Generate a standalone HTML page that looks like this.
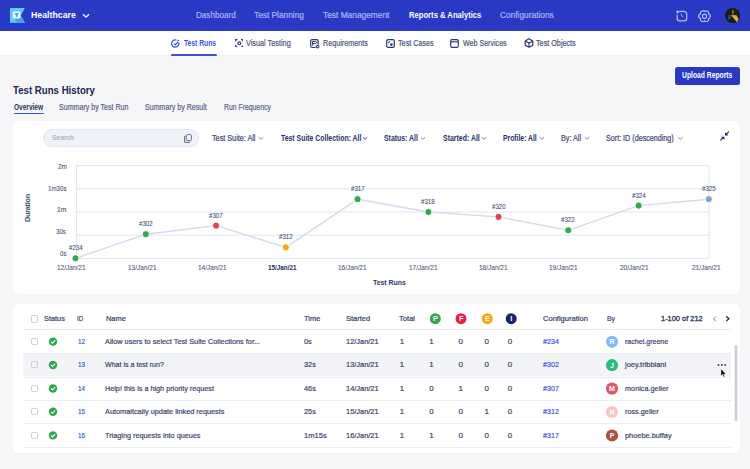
<!DOCTYPE html>
<html><head><meta charset="utf-8">
<style>
html,body{margin:0;padding:0;width:750px;height:469px;overflow:hidden;background:#f6f6f9;font-family:"Liberation Sans",sans-serif;}
.abs{position:absolute;}
.t{position:absolute;white-space:nowrap;transform-origin:0 0;}
#hdr{position:absolute;left:0;top:0;width:750px;height:31px;background:#2a39c4;}
#sub{position:absolute;left:0;top:31px;width:750px;height:24px;background:#fff;box-shadow:0 1px 3px rgba(30,40,80,0.04);}
.card{position:absolute;background:#fff;border-radius:5px;box-shadow:0 0 1.5px rgba(40,50,90,0.05);}
.cb{position:absolute;width:5.3px;height:5.3px;border:1.2px solid #cdcfd6;border-radius:1.6px;}
.hl{position:absolute;left:23px;width:708px;height:1px;background:#eceef4;}
</style></head><body>
<div id="hdr"></div>
<div id="sub"></div>
<!-- logo -->
<svg class="abs" style="left:10px;top:8.2px" width="15" height="15" viewBox="0 0 15 15">
  <path d="M0 0H14.8L10.8 7.4L14.8 14.8H0Z" fill="#5ccbfa"/>
  <path d="M4 10.6L11.9 9.3L14.8 14.8H7.5Z" fill="#4a9ff3"/>
  <rect x="2.9" y="3.5" width="7.5" height="7" rx="1.6" fill="#fff"/>
  <path d="M4.6 4.9H8.7V6.6H7.5V9.2H5.8V6.6H4.6Z" fill="#4a9ff3"/>
</svg>
<svg class="abs" style="left:82px;top:13px" width="8" height="6" viewBox="0 0 8 6"><path d="M1 1.2L4 4.2L7 1.2" fill="none" stroke="#fff" stroke-width="1.3"/></svg>
<!-- header right icons -->
<svg class="abs" style="left:675.7px;top:9.6px" width="12" height="12" viewBox="0 0 12 12">
  <path d="M1.2 4.8V8.3A2.6 2.6 0 0 0 3.8 10.9H8.1A2.6 2.6 0 0 0 10.7 8.3V4A2.6 2.6 0 0 0 8.1 1.4H3.4" fill="none" stroke="#b6c2ff" stroke-width="1.15"/>
  <path d="M0.4 0.6L3.9 1.3L1 3.9Z" fill="#b6c2ff"/>
  <path d="M5 3.6L5.9 6.1L7 6.8" fill="none" stroke="#b6c2ff" stroke-width="0.8"/>
</svg>
<svg class="abs" style="left:698px;top:10px" width="13" height="13" viewBox="0 0 13 13">
  <path d="M12.30,6.20 L12.28,6.50 L12.23,6.80 L12.13,7.09 L12.00,7.37 L11.84,7.63 L11.65,7.87 L11.42,8.09 L11.16,8.27 L10.86,8.42 L10.44,8.48 L10.60,8.86 L10.63,9.20 L10.59,9.52 L10.52,9.82 L10.41,10.11 L10.27,10.38 L10.09,10.63 L9.88,10.86 L9.65,11.06 L9.40,11.22 L9.13,11.36 L8.84,11.46 L8.54,11.52 L8.24,11.55 L7.93,11.54 L7.63,11.49 L7.32,11.40 L7.03,11.27 L6.76,11.08 L6.50,10.75 L6.24,11.08 L5.97,11.27 L5.68,11.40 L5.37,11.49 L5.07,11.54 L4.76,11.55 L4.46,11.52 L4.16,11.46 L3.87,11.36 L3.60,11.22 L3.35,11.06 L3.12,10.86 L2.91,10.63 L2.73,10.38 L2.59,10.11 L2.48,9.82 L2.41,9.52 L2.37,9.20 L2.40,8.86 L2.56,8.48 L2.14,8.42 L1.84,8.27 L1.58,8.09 L1.35,7.87 L1.16,7.63 L1.00,7.37 L0.87,7.09 L0.77,6.80 L0.72,6.50 L0.70,6.20 L0.72,5.90 L0.77,5.60 L0.87,5.31 L1.00,5.03 L1.16,4.77 L1.35,4.53 L1.58,4.31 L1.84,4.13 L2.14,3.98 L2.56,3.92 L2.40,3.54 L2.37,3.20 L2.41,2.88 L2.48,2.58 L2.59,2.29 L2.73,2.02 L2.91,1.77 L3.12,1.54 L3.35,1.34 L3.60,1.18 L3.87,1.04 L4.16,0.94 L4.46,0.88 L4.76,0.85 L5.07,0.86 L5.37,0.91 L5.68,1.00 L5.97,1.13 L6.24,1.32 L6.50,1.65 L6.76,1.32 L7.03,1.13 L7.32,1.00 L7.63,0.91 L7.93,0.86 L8.24,0.85 L8.54,0.88 L8.84,0.94 L9.13,1.04 L9.40,1.18 L9.65,1.34 L9.88,1.54 L10.09,1.77 L10.27,2.02 L10.41,2.29 L10.52,2.58 L10.59,2.88 L10.63,3.20 L10.60,3.54 L10.44,3.92 L10.86,3.98 L11.16,4.13 L11.42,4.31 L11.65,4.53 L11.84,4.77 L12.00,5.03 L12.13,5.31 L12.23,5.60 L12.28,5.90Z" fill="none" stroke="#b6c2ff" stroke-width="1.15" stroke-linejoin="round"/>
  <circle cx="6.5" cy="6.2" r="2.1" fill="none" stroke="#b6c2ff" stroke-width="1.15"/>
</svg>
<svg class="abs" style="left:724.8px;top:7.8px" width="15.2" height="15.2" viewBox="0 0 15.2 15.2">
  <defs><clipPath id="av"><circle cx="7.6" cy="7.6" r="7.6"/></clipPath></defs>
  <circle cx="7.6" cy="7.6" r="7.6" fill="#1e1a14"/>
  <g clip-path="url(#av)">
    <path d="M5.9 7.1L11.4 7.3L13.6 11L12 14.3Z" fill="#e6b040"/>
    <ellipse cx="4.6" cy="9.2" rx="1.7" ry="2.4" fill="#22428f"/>
    <rect x="7" y="1.9" width="1.9" height="4.6" rx="0.8" fill="#86672f"/>
  </g>
</svg>
<!-- subnav icons -->
<svg class="abs" style="left:170.8px;top:38.6px" width="9.2" height="9.2" viewBox="0 0 10 10">
  <path d="M8.6 4.3A4 4 0 1 1 6 1.1" fill="none" stroke="#3b4fe0" stroke-width="1.3"/>
  <path d="M3.1 5L4.6 6.5L7.9 3" fill="none" stroke="#3b4fe0" stroke-width="1.3"/>
  <circle cx="7.8" cy="1.6" r="0.9" fill="#3b4fe0"/>
</svg>
<div class="abs" style="left:171.2px;top:54px;width:46px;height:1.7px;background:#3b4fe0;border-radius:1px"></div>
<svg class="abs" style="left:234.6px;top:38.7px" width="8.6" height="8.6" viewBox="0 0 9 9">
  <path d="M0.7 2.6V0.7H2.6M6.4 0.7H8.3V2.6M8.3 6.4V8.3H6.4M2.6 8.3H0.7V6.4" fill="none" stroke="#2e3870" stroke-width="1.2"/>
  <circle cx="4.5" cy="4.5" r="1.5" fill="none" stroke="#2e3870" stroke-width="1.2"/>
</svg>
<svg class="abs" style="left:310px;top:38.5px" width="10" height="10" viewBox="0 0 10 10">
  <rect x="0.7" y="0.7" width="7.4" height="7.8" rx="1.4" fill="none" stroke="#2e3870" stroke-width="1.2"/>
  <path d="M2.6 2.4H5.4A1.1 1.1 0 0 1 5.4 4.6H2.6M2.6 2.4V6.8" fill="none" stroke="#2e3870" stroke-width="1"/>
  <circle cx="7.6" cy="7.6" r="2.1" fill="#2e3870" stroke="#fff" stroke-width="0.6"/>
  <circle cx="7.6" cy="7.6" r="0.7" fill="#fff"/>
</svg>
<svg class="abs" style="left:385.5px;top:38.5px" width="9" height="9" viewBox="0 0 9 9">
  <rect x="0.7" y="0.7" width="7.6" height="7.6" rx="1.4" fill="none" stroke="#2e3870" stroke-width="1.2"/>
  <path d="M2.2 3.9L3.9 2.4" fill="none" stroke="#2e3870" stroke-width="1.1"/>
  <circle cx="5.4" cy="5.6" r="1.35" fill="#2e3870"/>
</svg>
<svg class="abs" style="left:449.8px;top:38.5px" width="9" height="9" viewBox="0 0 9 9">
  <rect x="0.7" y="0.7" width="7.6" height="7.6" rx="1.2" fill="none" stroke="#2e3870" stroke-width="1.2"/>
  <path d="M0.7 2.8H8.3" fill="none" stroke="#2e3870" stroke-width="1.1"/>
</svg>
<svg class="abs" style="left:523.5px;top:38.3px" width="10" height="10" viewBox="0 0 10 10">
  <path d="M5 0.8L8.8 3V7.2L5 9.3L1.2 7.2V3Z" fill="none" stroke="#2e3870" stroke-width="1.2" stroke-linejoin="round"/>
  <path d="M1.5 3.2L5 5.1L8.5 3.2M5 5.1V9" fill="none" stroke="#2e3870" stroke-width="1.1"/>
</svg>
<!-- upload button -->
<div class="abs" style="left:674px;top:66px;width:67px;height:19px;background:#fff;border-radius:3px;opacity:.9"></div>
<div class="abs" style="left:675px;top:67px;width:65px;height:17.5px;background:#2a39c4;border-radius:2.5px"></div>
<!-- tabs underline -->
<div class="abs" style="left:14px;top:112.6px;width:30px;height:1.5px;background:#3b4fe0;border-radius:1px"></div>
<!-- cards -->
<div class="card" style="left:12.8px;top:121.4px;width:727px;height:172.9px"></div>
<div class="card" style="left:12.9px;top:303.6px;width:726.9px;height:149.3px"></div>
<!-- search -->
<div class="abs" style="left:43px;top:129px;width:153.5px;height:15.7px;background:#f0f2f9;border:1px solid #e2e6f1;border-radius:9px"></div>
<svg class="abs" style="left:183.5px;top:133.5px" width="8" height="9" viewBox="0 0 8 9">
  <rect x="2.2" y="0.6" width="5.2" height="6" rx="1" fill="none" stroke="#5a6280" stroke-width="0.9"/>
  <path d="M1.6 2.3H0.6V8.4H5.7V7.4" fill="none" stroke="#5a6280" stroke-width="0.9"/>
</svg>
<!-- filter chevrons -->
<svg class="abs" style="left:0;top:0" width="750" height="160" viewBox="0 0 750 160">
  <g fill="none" stroke="#6b7399" stroke-width="0.9">
    <path d="M259 137.3L261.1 139.3L263.2 137.3"/>
    <path d="M363 137.3L365.1 139.3L367.2 137.3" stroke="#24306a"/>
    <path d="M420.9 137.3L423 139.3L425.1 137.3"/>
    <path d="M482 137.3L484.1 139.3L486.2 137.3"/>
    <path d="M539.8 137.3L541.9 139.3L544 137.3"/>
    <path d="M585 137.3L587.1 139.3L589.2 137.3"/>
    <path d="M678.4 137.3L680.5 139.3L682.6 137.3"/>
  </g>
  <g fill="#1c2661">
    <path d="M725 132.2V135.6H728.4Z"/>
    <path d="M721 136.7H724.3V140Z"/>
  </g>
  <g stroke="#1c2661" stroke-width="1.2" fill="none">
    <path d="M726.2 134.4L728.9 131.7"/>
    <path d="M723 137.8L720.4 140.4"/>
  </g>
</svg>
<svg class="abs" style="left:0;top:0" width="750" height="469" viewBox="0 0 750 469">
<line x1="76" y1="165.6" x2="709" y2="165.6" stroke="#e1e5f2" stroke-width="1"/>
<line x1="76" y1="188.8" x2="709" y2="188.8" stroke="#e1e5f2" stroke-width="1"/>
<line x1="76" y1="212.0" x2="709" y2="212.0" stroke="#e1e5f2" stroke-width="1"/>
<line x1="76" y1="235.2" x2="709" y2="235.2" stroke="#e1e5f2" stroke-width="1"/>
<line x1="76" y1="258.4" x2="709" y2="258.4" stroke="#e1e5f2" stroke-width="1"/>
<line x1="76.4" y1="165.5" x2="76.4" y2="258.3" stroke="#e1e5f2" stroke-width="1"/>
<line x1="709" y1="165.5" x2="709" y2="258.3" stroke="#e1e5f2" stroke-width="1"/>
<path d="M75.5,258.3 L145.8,234.2 L216.1,225.6 L285.8,247.4 L357.6,199.2 L428.4,212.0 L498.5,216.9 L568.2,230.3 L638.6,205.6 L708.8,199.2" fill="none" stroke="#d3daef" stroke-width="1.4"/>
<circle cx="75.5" cy="258.3" r="3.6" fill="#33a84f" stroke="#fff" stroke-width="1"/>
<circle cx="145.8" cy="234.2" r="3.6" fill="#33a84f" stroke="#fff" stroke-width="1"/>
<circle cx="216.1" cy="225.6" r="3.6" fill="#dc4457" stroke="#fff" stroke-width="1"/>
<circle cx="285.8" cy="247.4" r="3.6" fill="#f6aa0c" stroke="#fff" stroke-width="1"/>
<circle cx="357.6" cy="199.2" r="3.6" fill="#33a84f" stroke="#fff" stroke-width="1"/>
<circle cx="428.4" cy="212.0" r="3.6" fill="#33a84f" stroke="#fff" stroke-width="1"/>
<circle cx="498.5" cy="216.9" r="3.6" fill="#dc4457" stroke="#fff" stroke-width="1"/>
<circle cx="568.2" cy="230.3" r="3.6" fill="#33a84f" stroke="#fff" stroke-width="1"/>
<circle cx="638.6" cy="205.6" r="3.6" fill="#33a84f" stroke="#fff" stroke-width="1"/>
<circle cx="708.8" cy="199.2" r="3.6" fill="#7aa4d4" stroke="#fff" stroke-width="1"/>
</svg>
<!-- rotated Duration -->
<div class="t" style="left:28px;top:208.1px;transform-origin:50% 50%;transform:translate(-50%,-50%) rotate(-90deg);font-size:7.2px;line-height:7.2px;font-weight:700;color:#3a4680;letter-spacing:-0.2px">Duration</div>
<!-- table -->
<div class="hl" style="top:329px;height:1.3px;background:#e9ebf1"></div>
<div class="abs" style="left:22.5px;top:353px;width:708px;height:23.3px;background:#f3f4f7"></div>
<div class="hl" style="top:353px"></div>
<div class="hl" style="top:376.5px"></div>
<div class="hl" style="top:400px"></div>
<div class="hl" style="top:423.3px"></div>
<div class="hl" style="top:446.7px"></div>
<div class="cb" style="left:30.7px;top:315.3px"></div>
<div class="cb" style="left:30.7px;top:337.8px"></div>
<div class="cb" style="left:30.7px;top:361.2px"></div>
<div class="cb" style="left:30.7px;top:384.7px"></div>
<div class="cb" style="left:30.7px;top:408px"></div>
<div class="cb" style="left:30.7px;top:431.6px"></div>
<svg class="abs" style="left:0;top:300px" width="750" height="169" viewBox="0 300 750 169">
  <g>
    <circle cx="53" cy="341.6" r="4.2" fill="#2ea84c"/><path d="M51 341.6L52.5 343.1L55.1 340.3" fill="none" stroke="#fff" stroke-width="1.1"/>
    <circle cx="53" cy="365" r="4.2" fill="#2ea84c"/><path d="M51 365L52.5 366.5L55.1 363.7" fill="none" stroke="#fff" stroke-width="1.1"/>
    <circle cx="53" cy="388.5" r="4.2" fill="#2ea84c"/><path d="M51 388.5L52.5 390L55.1 387.2" fill="none" stroke="#fff" stroke-width="1.1"/>
    <circle cx="53" cy="411.8" r="4.2" fill="#2ea84c"/><path d="M51 411.8L52.5 413.3L55.1 410.5" fill="none" stroke="#fff" stroke-width="1.1"/>
    <circle cx="53" cy="435.4" r="4.2" fill="#2ea84c"/><path d="M51 435.4L52.5 436.9L55.1 434.1" fill="none" stroke="#fff" stroke-width="1.1"/>
  </g>
  <g font-family="Liberation Sans" font-size="7.4" font-weight="700" fill="#fff" text-anchor="middle">
    <circle cx="435.3" cy="318.7" r="5.5" fill="#35a84b"/><text x="435.4" y="321.4">P</text>
    <circle cx="461" cy="318.7" r="5.5" fill="#e41f45"/><text x="461.2" y="321.4">F</text>
    <circle cx="487.3" cy="318.7" r="5.5" fill="#f5a80e"/><text x="487.4" y="321.4">E</text>
    <circle cx="511.2" cy="318.7" r="5.5" fill="#17286a"/><text x="511.2" y="321.4">I</text>
  </g>
  <g font-family="Liberation Sans" font-size="7" font-weight="700" fill="#fff" text-anchor="middle">
    <circle cx="612" cy="341.8" r="6.1" fill="#83b9f6"/><text x="612" y="344.4">R</text>
    <circle cx="612" cy="365.2" r="6.1" fill="#2bbd7e"/><text x="612" y="367.8">J</text>
    <circle cx="612" cy="388.6" r="6.1" fill="#e0566a"/><text x="612" y="391.2">M</text>
    <circle cx="612" cy="412" r="6.1" fill="#f9c6c3"/><text x="612" y="414.6">R</text>
    <circle cx="612" cy="435.5" r="6.1" fill="#b0503f"/><text x="612" y="438.1">P</text>
  </g>
  <path d="M716 316.3L713.4 318.7L716 321.1" fill="none" stroke="#8aaed8" stroke-width="1.1"/>
  <path d="M726.3 316.3L728.9 318.7L726.3 321.1" fill="none" stroke="#1f2a5c" stroke-width="1.3"/>
  <g fill="#3b4352"><circle cx="718.5" cy="365" r="1"/><circle cx="721.8" cy="365" r="1"/><circle cx="725.1" cy="365" r="1"/></g>
  <path d="M720.9 368.8V376.2L722.6 374.6L723.8 377.2L724.9 376.7L723.8 374.2L726.1 374.1Z" fill="#111" stroke="#fff" stroke-width="0.5"/>
  <rect x="734.7" y="345" width="2.6" height="76" rx="1.3" fill="#c9ccd4"/>
</svg>
<div class="t" style="left:30.50px;top:11.28px;font-size:9.2px;line-height:9.2px;font-weight:700;color:#ffffff;transform:scaleX(0.9536);">Healthcare</div>
<div class="t" style="left:195.60px;top:11.41px;font-size:8.7px;line-height:8.7px;font-weight:400;color:#a9b6f5;transform:scaleX(0.9328);-webkit-text-stroke:0.2px #a9b6f5;">Dashboard</div>
<div class="t" style="left:253.90px;top:11.41px;font-size:8.7px;line-height:8.7px;font-weight:400;color:#a9b6f5;transform:scaleX(0.9575);-webkit-text-stroke:0.2px #a9b6f5;">Test Planning</div>
<div class="t" style="left:323.20px;top:11.41px;font-size:8.7px;line-height:8.7px;font-weight:400;color:#a9b6f5;transform:scaleX(0.9621);-webkit-text-stroke:0.2px #a9b6f5;">Test Management</div>
<div class="t" style="left:408.60px;top:11.41px;font-size:8.7px;line-height:8.7px;font-weight:700;color:#ffffff;transform:scaleX(0.8801);">Reports &amp; Analytics</div>
<div class="t" style="left:499.50px;top:11.41px;font-size:8.7px;line-height:8.7px;font-weight:400;color:#a9b6f5;transform:scaleX(0.9599);-webkit-text-stroke:0.2px #a9b6f5;">Configurations</div>
<div class="t" style="left:184.30px;top:39.34px;font-size:8.3px;line-height:8.3px;font-weight:700;color:#3b4fe0;transform:scaleX(0.8125);">Test Runs</div>
<div class="t" style="left:246.40px;top:39.34px;font-size:8.3px;line-height:8.3px;font-weight:400;color:#4d5682;transform:scaleX(0.8789);-webkit-text-stroke:0.2px #4d5682;">Visual Testing</div>
<div class="t" style="left:323.00px;top:39.34px;font-size:8.3px;line-height:8.3px;font-weight:400;color:#4d5682;transform:scaleX(0.8699);-webkit-text-stroke:0.2px #4d5682;">Requirements</div>
<div class="t" style="left:397.70px;top:39.34px;font-size:8.3px;line-height:8.3px;font-weight:400;color:#4d5682;transform:scaleX(0.8706);-webkit-text-stroke:0.2px #4d5682;">Test Cases</div>
<div class="t" style="left:463.00px;top:39.34px;font-size:8.3px;line-height:8.3px;font-weight:400;color:#4d5682;transform:scaleX(0.8549);-webkit-text-stroke:0.2px #4d5682;">Web Services</div>
<div class="t" style="left:536.40px;top:39.34px;font-size:8.3px;line-height:8.3px;font-weight:400;color:#4d5682;transform:scaleX(0.8703);-webkit-text-stroke:0.2px #4d5682;">Test Objects</div>
<div class="t" style="left:13.00px;top:85.19px;font-size:10.6px;line-height:10.6px;font-weight:700;color:#1a2352;transform:scaleX(0.9114);">Test Runs History</div>
<div class="t" style="left:682.20px;top:71.06px;font-size:8.4px;line-height:8.4px;font-weight:700;color:#ffffff;transform:scaleX(0.8071);">Upload Reports</div>
<div class="t" style="left:13.80px;top:103.83px;font-size:8.2px;line-height:8.2px;font-weight:700;color:#2b3563;transform:scaleX(0.7991);">Overview</div>
<div class="t" style="left:59.00px;top:103.83px;font-size:8.2px;line-height:8.2px;font-weight:400;color:#5a6390;transform:scaleX(0.8644);-webkit-text-stroke:0.2px #5a6390;">Summary by Test Run</div>
<div class="t" style="left:145.40px;top:103.83px;font-size:8.2px;line-height:8.2px;font-weight:400;color:#5a6390;transform:scaleX(0.8648);-webkit-text-stroke:0.2px #5a6390;">Summary by Result</div>
<div class="t" style="left:224.40px;top:103.83px;font-size:8.2px;line-height:8.2px;font-weight:400;color:#5a6390;transform:scaleX(0.8368);-webkit-text-stroke:0.2px #5a6390;">Run Frequency</div>
<div class="t" style="left:52.00px;top:133.97px;font-size:7.8px;line-height:7.8px;font-weight:400;color:#a6aec4;transform:scaleX(0.8823);-webkit-text-stroke:0.2px #a6aec4;">Search</div>
<div class="t" style="left:211.60px;top:134.04px;font-size:8.3px;line-height:8.3px;font-weight:400;color:#3d4775;transform:scaleX(0.8727);-webkit-text-stroke:0.2px #3d4775;">Test Suite: All</div>
<div class="t" style="left:280.80px;top:134.04px;font-size:8.3px;line-height:8.3px;font-weight:700;color:#24306a;transform:scaleX(0.8305);">Test Suite Collection: All</div>
<div class="t" style="left:384.40px;top:134.04px;font-size:8.3px;line-height:8.3px;font-weight:700;color:#24306a;transform:scaleX(0.8300);">Status: All</div>
<div class="t" style="left:442.80px;top:134.04px;font-size:8.3px;line-height:8.3px;font-weight:700;color:#24306a;transform:scaleX(0.8373);">Started: All</div>
<div class="t" style="left:503.30px;top:134.04px;font-size:8.3px;line-height:8.3px;font-weight:700;color:#24306a;transform:scaleX(0.8183);">Profile: All</div>
<div class="t" style="left:560.60px;top:134.04px;font-size:8.3px;line-height:8.3px;font-weight:400;color:#3d4775;transform:scaleX(0.8703);-webkit-text-stroke:0.2px #3d4775;">By: All</div>
<div class="t" style="left:606.20px;top:134.04px;font-size:8.3px;line-height:8.3px;font-weight:400;color:#3d4775;transform:scaleX(0.8635);-webkit-text-stroke:0.2px #3d4775;">Sort: ID (descending)</div>
<div class="t" style="left:57.50px;top:163.92px;font-size:6.8px;line-height:6.8px;font-weight:400;color:#4a5480;transform:scaleX(0.9509);-webkit-text-stroke:0.1px #4a5480;">2m</div>
<div class="t" style="left:47.70px;top:185.62px;font-size:6.8px;line-height:6.8px;font-weight:400;color:#4a5480;transform:scaleX(0.9094);-webkit-text-stroke:0.1px #4a5480;">1m30s</div>
<div class="t" style="left:57.00px;top:207.42px;font-size:6.8px;line-height:6.8px;font-weight:400;color:#4a5480;-webkit-text-stroke:0.1px #4a5480;">1m</div>
<div class="t" style="left:56.40px;top:229.02px;font-size:6.8px;line-height:6.8px;font-weight:400;color:#4a5480;transform:scaleX(0.8996);-webkit-text-stroke:0.1px #4a5480;">30s</div>
<div class="t" style="left:59.80px;top:251.12px;font-size:6.8px;line-height:6.8px;font-weight:400;color:#4a5480;transform:scaleX(0.8997);-webkit-text-stroke:0.1px #4a5480;">0s</div>
<div class="t" style="left:68.50px;top:245.39px;font-size:6.6px;line-height:6.6px;font-weight:400;color:#454e78;transform:scaleX(0.9332);-webkit-text-stroke:0.08px #454e78;">#234</div>
<div class="t" style="left:57.25px;top:265.33px;font-size:6.9px;line-height:6.9px;font-weight:400;color:#4f5880;transform:scaleX(0.9430);-webkit-text-stroke:0.08px #4f5880;">12/Jan/21</div>
<div class="t" style="left:138.80px;top:221.29px;font-size:6.6px;line-height:6.6px;font-weight:400;color:#454e78;transform:scaleX(0.9332);-webkit-text-stroke:0.08px #454e78;">#302</div>
<div class="t" style="left:127.55px;top:265.33px;font-size:6.9px;line-height:6.9px;font-weight:400;color:#4f5880;transform:scaleX(0.9430);-webkit-text-stroke:0.08px #4f5880;">13/Jan/21</div>
<div class="t" style="left:209.10px;top:212.69px;font-size:6.6px;line-height:6.6px;font-weight:400;color:#454e78;transform:scaleX(0.9332);-webkit-text-stroke:0.08px #454e78;">#307</div>
<div class="t" style="left:197.85px;top:265.33px;font-size:6.9px;line-height:6.9px;font-weight:400;color:#4f5880;transform:scaleX(0.9430);-webkit-text-stroke:0.08px #4f5880;">14/Jan/21</div>
<div class="t" style="left:278.80px;top:234.49px;font-size:6.6px;line-height:6.6px;font-weight:400;color:#454e78;transform:scaleX(0.9332);-webkit-text-stroke:0.08px #454e78;">#312</div>
<div class="t" style="left:268.15px;top:265.33px;font-size:6.9px;line-height:6.9px;font-weight:700;color:#1f2a5c;transform:scaleX(0.9199);">15/Jan/21</div>
<div class="t" style="left:350.60px;top:186.29px;font-size:6.6px;line-height:6.6px;font-weight:400;color:#454e78;transform:scaleX(0.9332);-webkit-text-stroke:0.08px #454e78;">#317</div>
<div class="t" style="left:338.45px;top:265.33px;font-size:6.9px;line-height:6.9px;font-weight:400;color:#4f5880;transform:scaleX(0.9430);-webkit-text-stroke:0.08px #4f5880;">16/Jan/21</div>
<div class="t" style="left:421.40px;top:199.09px;font-size:6.6px;line-height:6.6px;font-weight:400;color:#454e78;transform:scaleX(0.9332);-webkit-text-stroke:0.08px #454e78;">#318</div>
<div class="t" style="left:408.75px;top:265.33px;font-size:6.9px;line-height:6.9px;font-weight:400;color:#4f5880;transform:scaleX(0.9430);-webkit-text-stroke:0.08px #4f5880;">17/Jan/21</div>
<div class="t" style="left:491.50px;top:203.99px;font-size:6.6px;line-height:6.6px;font-weight:400;color:#454e78;transform:scaleX(0.9332);-webkit-text-stroke:0.08px #454e78;">#320</div>
<div class="t" style="left:479.05px;top:265.33px;font-size:6.9px;line-height:6.9px;font-weight:400;color:#4f5880;transform:scaleX(0.9430);-webkit-text-stroke:0.08px #4f5880;">18/Jan/21</div>
<div class="t" style="left:561.20px;top:217.39px;font-size:6.6px;line-height:6.6px;font-weight:400;color:#454e78;transform:scaleX(0.9332);-webkit-text-stroke:0.08px #454e78;">#322</div>
<div class="t" style="left:549.35px;top:265.33px;font-size:6.9px;line-height:6.9px;font-weight:400;color:#4f5880;transform:scaleX(0.9430);-webkit-text-stroke:0.08px #4f5880;">19/Jan/21</div>
<div class="t" style="left:631.60px;top:192.69px;font-size:6.6px;line-height:6.6px;font-weight:400;color:#454e78;transform:scaleX(0.9332);-webkit-text-stroke:0.08px #454e78;">#324</div>
<div class="t" style="left:619.65px;top:265.33px;font-size:6.9px;line-height:6.9px;font-weight:400;color:#4f5880;transform:scaleX(0.9430);-webkit-text-stroke:0.08px #4f5880;">20/Jan/21</div>
<div class="t" style="left:701.80px;top:186.29px;font-size:6.6px;line-height:6.6px;font-weight:400;color:#454e78;transform:scaleX(0.9332);-webkit-text-stroke:0.08px #454e78;">#325</div>
<div class="t" style="left:692.15px;top:265.33px;font-size:6.9px;line-height:6.9px;font-weight:400;color:#4f5880;transform:scaleX(0.9430);-webkit-text-stroke:0.08px #4f5880;">21/Jan/21</div>
<div class="t" style="left:373.30px;top:278.91px;font-size:7.4px;line-height:7.4px;font-weight:700;color:#2b3668;transform:scaleX(0.9297);">Test Runs</div>
<div class="t" style="left:44.00px;top:315.27px;font-size:7.8px;line-height:7.8px;font-weight:500;color:#333d6a;transform:scaleX(0.9457);-webkit-text-stroke:0.2px #333d6a;">Status</div>
<div class="t" style="left:76.80px;top:315.27px;font-size:7.8px;line-height:7.8px;font-weight:500;color:#333d6a;transform:scaleX(0.7837);-webkit-text-stroke:0.2px #333d6a;">ID</div>
<div class="t" style="left:105.80px;top:315.27px;font-size:7.8px;line-height:7.8px;font-weight:500;color:#333d6a;transform:scaleX(0.9530);-webkit-text-stroke:0.2px #333d6a;">Name</div>
<div class="t" style="left:303.60px;top:315.27px;font-size:7.8px;line-height:7.8px;font-weight:500;color:#333d6a;transform:scaleX(0.9581);-webkit-text-stroke:0.2px #333d6a;">Time</div>
<div class="t" style="left:345.90px;top:315.27px;font-size:7.8px;line-height:7.8px;font-weight:500;color:#333d6a;transform:scaleX(0.9636);-webkit-text-stroke:0.2px #333d6a;">Started</div>
<div class="t" style="left:398.90px;top:315.27px;font-size:7.8px;line-height:7.8px;font-weight:500;color:#333d6a;transform:scaleX(0.9739);-webkit-text-stroke:0.2px #333d6a;">Total</div>
<div class="t" style="left:543.00px;top:315.27px;font-size:7.8px;line-height:7.8px;font-weight:500;color:#333d6a;transform:scaleX(0.9665);-webkit-text-stroke:0.2px #333d6a;">Configuration</div>
<div class="t" style="left:607.40px;top:315.27px;font-size:7.8px;line-height:7.8px;font-weight:500;color:#333d6a;transform:scaleX(0.8695);-webkit-text-stroke:0.2px #333d6a;">By</div>
<div class="t" style="left:661.10px;top:315.27px;font-size:7.8px;line-height:7.8px;font-weight:500;color:#2a3460;transform:scaleX(0.9528);-webkit-text-stroke:0.3px #2a3460;">1-100 of 212</div>
<div class="t" style="left:77.90px;top:337.70px;font-size:8.0px;line-height:8.0px;font-weight:400;color:#4354e0;transform:scaleX(0.7831);-webkit-text-stroke:0.2px #4354e0;">12</div>
<div class="t" style="left:105.30px;top:337.70px;font-size:8.0px;line-height:8.0px;font-weight:400;color:#38426e;transform:scaleX(0.9162);-webkit-text-stroke:0.2px #38426e;">Allow users to select Test Suite Collections for...</div>
<div class="t" style="left:303.50px;top:337.70px;font-size:8.0px;line-height:8.0px;font-weight:400;color:#38426e;transform:scaleX(0.9232);-webkit-text-stroke:0.2px #38426e;">0s</div>
<div class="t" style="left:345.70px;top:337.70px;font-size:8.0px;line-height:8.0px;font-weight:400;color:#38426e;transform:scaleX(0.9274);-webkit-text-stroke:0.2px #38426e;">12/Jan/21</div>
<div class="t" style="left:399.80px;top:337.70px;font-size:8.0px;line-height:8.0px;font-weight:400;color:#38426e;-webkit-text-stroke:0.2px #38426e;">1</div>
<div class="t" style="left:429.30px;top:337.70px;font-size:8.0px;line-height:8.0px;font-weight:400;color:#38426e;-webkit-text-stroke:0.2px #38426e;">1</div>
<div class="t" style="left:458.50px;top:337.70px;font-size:8.0px;line-height:8.0px;font-weight:400;color:#38426e;-webkit-text-stroke:0.2px #38426e;">0</div>
<div class="t" style="left:484.50px;top:337.70px;font-size:8.0px;line-height:8.0px;font-weight:400;color:#38426e;-webkit-text-stroke:0.2px #38426e;">0</div>
<div class="t" style="left:507.80px;top:337.70px;font-size:8.0px;line-height:8.0px;font-weight:400;color:#38426e;-webkit-text-stroke:0.2px #38426e;">0</div>
<div class="t" style="left:542.60px;top:337.70px;font-size:8.0px;line-height:8.0px;font-weight:400;color:#4354e0;transform:scaleX(0.8938);-webkit-text-stroke:0.2px #4354e0;">#234</div>
<div class="t" style="left:625.00px;top:337.70px;font-size:8.0px;line-height:8.0px;font-weight:400;color:#38426e;transform:scaleX(0.8833);-webkit-text-stroke:0.2px #38426e;">rachel.greene</div>
<div class="t" style="left:77.90px;top:361.10px;font-size:8.0px;line-height:8.0px;font-weight:400;color:#4354e0;transform:scaleX(0.7831);-webkit-text-stroke:0.2px #4354e0;">13</div>
<div class="t" style="left:105.30px;top:361.10px;font-size:8.0px;line-height:8.0px;font-weight:400;color:#38426e;transform:scaleX(0.8833);-webkit-text-stroke:0.2px #38426e;">What is a test run?</div>
<div class="t" style="left:303.50px;top:361.10px;font-size:8.0px;line-height:8.0px;font-weight:400;color:#38426e;transform:scaleX(0.9148);-webkit-text-stroke:0.2px #38426e;">32s</div>
<div class="t" style="left:345.70px;top:361.10px;font-size:8.0px;line-height:8.0px;font-weight:400;color:#38426e;transform:scaleX(0.9274);-webkit-text-stroke:0.2px #38426e;">13/Jan/21</div>
<div class="t" style="left:399.80px;top:361.10px;font-size:8.0px;line-height:8.0px;font-weight:400;color:#38426e;-webkit-text-stroke:0.2px #38426e;">1</div>
<div class="t" style="left:429.30px;top:361.10px;font-size:8.0px;line-height:8.0px;font-weight:400;color:#38426e;-webkit-text-stroke:0.2px #38426e;">1</div>
<div class="t" style="left:458.50px;top:361.10px;font-size:8.0px;line-height:8.0px;font-weight:400;color:#38426e;-webkit-text-stroke:0.2px #38426e;">0</div>
<div class="t" style="left:484.50px;top:361.10px;font-size:8.0px;line-height:8.0px;font-weight:400;color:#38426e;-webkit-text-stroke:0.2px #38426e;">0</div>
<div class="t" style="left:507.80px;top:361.10px;font-size:8.0px;line-height:8.0px;font-weight:400;color:#38426e;-webkit-text-stroke:0.2px #38426e;">0</div>
<div class="t" style="left:542.60px;top:361.10px;font-size:8.0px;line-height:8.0px;font-weight:400;color:#4354e0;transform:scaleX(0.8938);-webkit-text-stroke:0.2px #4354e0;">#302</div>
<div class="t" style="left:624.93px;top:361.10px;font-size:8.0px;line-height:8.0px;font-weight:400;color:#38426e;transform:scaleX(0.9266);-webkit-text-stroke:0.2px #38426e;">joey.tribbiani</div>
<div class="t" style="left:77.90px;top:384.60px;font-size:8.0px;line-height:8.0px;font-weight:400;color:#4354e0;transform:scaleX(0.7831);-webkit-text-stroke:0.2px #4354e0;">14</div>
<div class="t" style="left:105.30px;top:384.60px;font-size:8.0px;line-height:8.0px;font-weight:400;color:#38426e;transform:scaleX(0.9045);-webkit-text-stroke:0.2px #38426e;">Help! this is a high priority request</div>
<div class="t" style="left:303.50px;top:384.60px;font-size:8.0px;line-height:8.0px;font-weight:400;color:#38426e;transform:scaleX(0.9148);-webkit-text-stroke:0.2px #38426e;">46s</div>
<div class="t" style="left:345.70px;top:384.60px;font-size:8.0px;line-height:8.0px;font-weight:400;color:#38426e;transform:scaleX(0.9274);-webkit-text-stroke:0.2px #38426e;">14/Jan/21</div>
<div class="t" style="left:399.80px;top:384.60px;font-size:8.0px;line-height:8.0px;font-weight:400;color:#38426e;-webkit-text-stroke:0.2px #38426e;">1</div>
<div class="t" style="left:429.30px;top:384.60px;font-size:8.0px;line-height:8.0px;font-weight:400;color:#38426e;-webkit-text-stroke:0.2px #38426e;">0</div>
<div class="t" style="left:458.50px;top:384.60px;font-size:8.0px;line-height:8.0px;font-weight:400;color:#38426e;-webkit-text-stroke:0.2px #38426e;">1</div>
<div class="t" style="left:484.50px;top:384.60px;font-size:8.0px;line-height:8.0px;font-weight:400;color:#38426e;-webkit-text-stroke:0.2px #38426e;">0</div>
<div class="t" style="left:507.80px;top:384.60px;font-size:8.0px;line-height:8.0px;font-weight:400;color:#38426e;-webkit-text-stroke:0.2px #38426e;">0</div>
<div class="t" style="left:542.60px;top:384.60px;font-size:8.0px;line-height:8.0px;font-weight:400;color:#4354e0;transform:scaleX(0.8938);-webkit-text-stroke:0.2px #4354e0;">#307</div>
<div class="t" style="left:625.00px;top:384.60px;font-size:8.0px;line-height:8.0px;font-weight:400;color:#38426e;transform:scaleX(0.9120);-webkit-text-stroke:0.2px #38426e;">monica.geller</div>
<div class="t" style="left:77.90px;top:407.90px;font-size:8.0px;line-height:8.0px;font-weight:400;color:#4354e0;transform:scaleX(0.7831);-webkit-text-stroke:0.2px #4354e0;">15</div>
<div class="t" style="left:105.30px;top:407.90px;font-size:8.0px;line-height:8.0px;font-weight:400;color:#38426e;transform:scaleX(0.9171);-webkit-text-stroke:0.2px #38426e;">Automaitcally update linked requests</div>
<div class="t" style="left:303.50px;top:407.90px;font-size:8.0px;line-height:8.0px;font-weight:400;color:#38426e;transform:scaleX(0.9148);-webkit-text-stroke:0.2px #38426e;">25s</div>
<div class="t" style="left:345.70px;top:407.90px;font-size:8.0px;line-height:8.0px;font-weight:400;color:#38426e;transform:scaleX(0.9274);-webkit-text-stroke:0.2px #38426e;">15/Jan/21</div>
<div class="t" style="left:399.80px;top:407.90px;font-size:8.0px;line-height:8.0px;font-weight:400;color:#38426e;-webkit-text-stroke:0.2px #38426e;">1</div>
<div class="t" style="left:429.30px;top:407.90px;font-size:8.0px;line-height:8.0px;font-weight:400;color:#38426e;-webkit-text-stroke:0.2px #38426e;">0</div>
<div class="t" style="left:458.50px;top:407.90px;font-size:8.0px;line-height:8.0px;font-weight:400;color:#38426e;-webkit-text-stroke:0.2px #38426e;">0</div>
<div class="t" style="left:484.50px;top:407.90px;font-size:8.0px;line-height:8.0px;font-weight:400;color:#38426e;-webkit-text-stroke:0.2px #38426e;">1</div>
<div class="t" style="left:507.80px;top:407.90px;font-size:8.0px;line-height:8.0px;font-weight:400;color:#38426e;-webkit-text-stroke:0.2px #38426e;">0</div>
<div class="t" style="left:542.60px;top:407.90px;font-size:8.0px;line-height:8.0px;font-weight:400;color:#4354e0;transform:scaleX(0.8938);-webkit-text-stroke:0.2px #4354e0;">#312</div>
<div class="t" style="left:625.00px;top:407.90px;font-size:8.0px;line-height:8.0px;font-weight:400;color:#38426e;transform:scaleX(0.9104);-webkit-text-stroke:0.2px #38426e;">ross.geller</div>
<div class="t" style="left:77.90px;top:431.50px;font-size:8.0px;line-height:8.0px;font-weight:400;color:#4354e0;transform:scaleX(0.7831);-webkit-text-stroke:0.2px #4354e0;">16</div>
<div class="t" style="left:105.30px;top:431.50px;font-size:8.0px;line-height:8.0px;font-weight:400;color:#38426e;transform:scaleX(0.9086);-webkit-text-stroke:0.2px #38426e;">Triaging requests into queues</div>
<div class="t" style="left:303.50px;top:431.50px;font-size:8.0px;line-height:8.0px;font-weight:400;color:#38426e;transform:scaleX(0.9495);-webkit-text-stroke:0.2px #38426e;">1m15s</div>
<div class="t" style="left:345.70px;top:431.50px;font-size:8.0px;line-height:8.0px;font-weight:400;color:#38426e;transform:scaleX(0.9274);-webkit-text-stroke:0.2px #38426e;">16/Jan/21</div>
<div class="t" style="left:399.80px;top:431.50px;font-size:8.0px;line-height:8.0px;font-weight:400;color:#38426e;-webkit-text-stroke:0.2px #38426e;">1</div>
<div class="t" style="left:429.30px;top:431.50px;font-size:8.0px;line-height:8.0px;font-weight:400;color:#38426e;-webkit-text-stroke:0.2px #38426e;">1</div>
<div class="t" style="left:458.50px;top:431.50px;font-size:8.0px;line-height:8.0px;font-weight:400;color:#38426e;-webkit-text-stroke:0.2px #38426e;">0</div>
<div class="t" style="left:484.50px;top:431.50px;font-size:8.0px;line-height:8.0px;font-weight:400;color:#38426e;-webkit-text-stroke:0.2px #38426e;">0</div>
<div class="t" style="left:507.80px;top:431.50px;font-size:8.0px;line-height:8.0px;font-weight:400;color:#38426e;-webkit-text-stroke:0.2px #38426e;">0</div>
<div class="t" style="left:542.60px;top:431.50px;font-size:8.0px;line-height:8.0px;font-weight:400;color:#4354e0;transform:scaleX(0.8938);-webkit-text-stroke:0.2px #4354e0;">#317</div>
<div class="t" style="left:625.00px;top:431.50px;font-size:8.0px;line-height:8.0px;font-weight:400;color:#38426e;transform:scaleX(0.9216);-webkit-text-stroke:0.2px #38426e;">phoebe.buffay</div>
</body></html>
